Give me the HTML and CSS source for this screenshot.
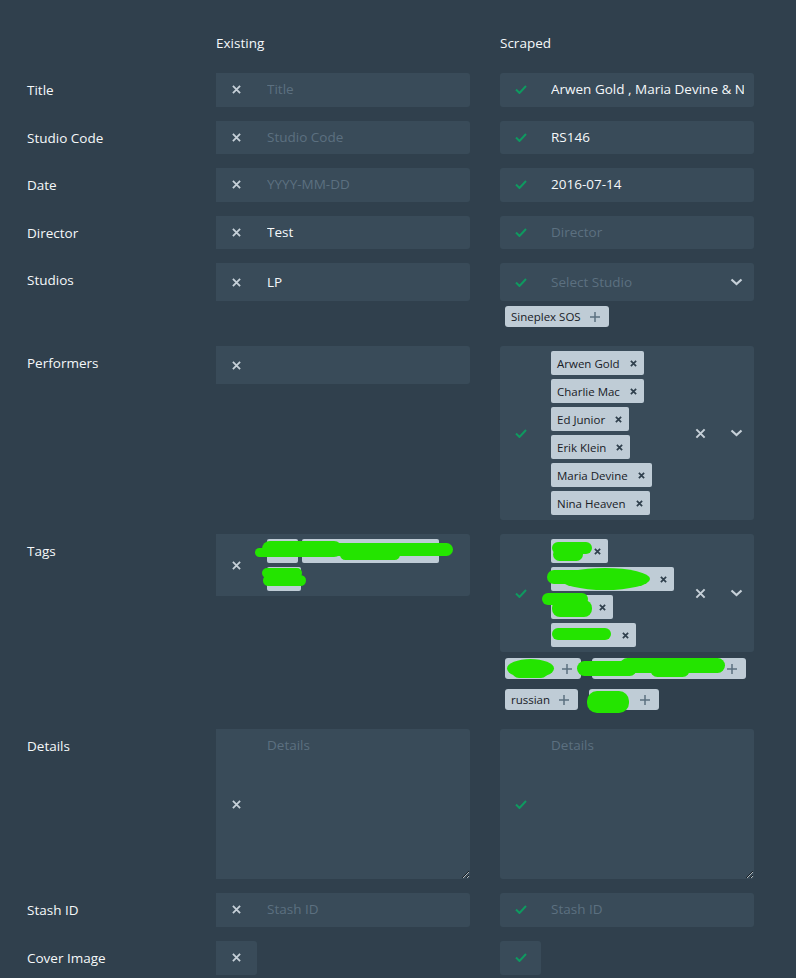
FILE: index.html
```html
<!DOCTYPE html>
<html lang="en">
<head>
    <meta charset="UTF-8">
    <title>Scene Scrape Results</title>
    <link rel="stylesheet" href="styles.css">
</head>
<body>
    <div class="scrape-dialog">
        <div class="scrape-row header-row">
            <div></div>
            <div class="col-head">Existing</div>
            <div class="col-head">Scraped</div>
        </div>

        <div class="scrape-row">
            <label class="row-label">Title</label>
            <div class="field existing">
                <button class="toggle"><svg class="icon-x" viewBox="0 0 10 10"><path d="M1 1L9 9M9 1L1 9"/></svg></button>
                <input class="value" placeholder="Title" readonly>
            </div>
            <div class="field scraped">
                <button class="toggle"><svg class="icon-check" viewBox="0 0 12 9"><path d="M1 4.5L4.5 8L11 1"/></svg></button>
                <input class="value" value="Arwen Gold , Maria Devine &amp; Nina Heaven" readonly>
            </div>
        </div>

        <div class="scrape-row">
            <label class="row-label">Studio Code</label>
            <div class="field existing">
                <button class="toggle"><svg class="icon-x" viewBox="0 0 10 10"><path d="M1 1L9 9M9 1L1 9"/></svg></button>
                <input class="value" placeholder="Studio Code" readonly>
            </div>
            <div class="field scraped">
                <button class="toggle"><svg class="icon-check" viewBox="0 0 12 9"><path d="M1 4.5L4.5 8L11 1"/></svg></button>
                <input class="value" value="RS146" readonly>
            </div>
        </div>

        <div class="scrape-row">
            <label class="row-label">Date</label>
            <div class="field existing">
                <button class="toggle"><svg class="icon-x" viewBox="0 0 10 10"><path d="M1 1L9 9M9 1L1 9"/></svg></button>
                <input class="value" placeholder="YYYY-MM-DD" readonly>
            </div>
            <div class="field scraped">
                <button class="toggle"><svg class="icon-check" viewBox="0 0 12 9"><path d="M1 4.5L4.5 8L11 1"/></svg></button>
                <input class="value" value="2016-07-14" readonly>
            </div>
        </div>

        <div class="scrape-row">
            <label class="row-label">Director</label>
            <div class="field existing">
                <button class="toggle"><svg class="icon-x" viewBox="0 0 10 10"><path d="M1 1L9 9M9 1L1 9"/></svg></button>
                <input class="value" value="Test" readonly>
            </div>
            <div class="field scraped">
                <button class="toggle"><svg class="icon-check" viewBox="0 0 12 9"><path d="M1 4.5L4.5 8L11 1"/></svg></button>
                <input class="value" placeholder="Director" readonly>
            </div>
        </div>

        <div class="scrape-row">
            <label class="row-label">Studios</label>
            <div class="field existing select">
                <button class="toggle"><svg class="icon-x" viewBox="0 0 10 10"><path d="M1 1L9 9M9 1L1 9"/></svg></button>
                <div class="select-values"><span class="single-value">LP</span></div>
            </div>
            <div>
                <div class="field scraped select">
                    <button class="toggle"><svg class="icon-check" viewBox="0 0 12 9"><path d="M1 4.5L4.5 8L11 1"/></svg></button>
                    <div class="select-values"><span class="placeholder">Select Studio</span></div>
                    <div class="indicator"><svg class="icon-chevron" viewBox="0 0 13 8"><path d="M1.5 1.5L6.5 6L11.5 1.5"/></svg></div>
                </div>
                <div class="new-items">
                    <span class="chip">Sineplex SOS<svg class="icon-plus" viewBox="0 0 10 10"><path d="M5 0V10M0 5H10"/></svg></span>
                </div>
            </div>
        </div>

        <div class="scrape-row">
            <label class="row-label">Performers</label>
            <div class="field existing select">
                <button class="toggle"><svg class="icon-x" viewBox="0 0 10 10"><path d="M1 1L9 9M9 1L1 9"/></svg></button>
                <div class="select-values"></div>
            </div>
            <div class="field scraped select multi">
                <button class="toggle"><svg class="icon-check" viewBox="0 0 12 9"><path d="M1 4.5L4.5 8L11 1"/></svg></button>
                <div class="select-values">
                    <span class="multi-value"><span class="mv-label">Arwen Gold</span><span class="mv-remove"><svg viewBox="0 0 8 8"><path d="M1 1L7 7M7 1L1 7"/></svg></span></span>
                    <span class="multi-value"><span class="mv-label">Charlie Mac</span><span class="mv-remove"><svg viewBox="0 0 8 8"><path d="M1 1L7 7M7 1L1 7"/></svg></span></span>
                    <span class="multi-value"><span class="mv-label">Ed Junior</span><span class="mv-remove"><svg viewBox="0 0 8 8"><path d="M1 1L7 7M7 1L1 7"/></svg></span></span>
                    <span class="multi-value"><span class="mv-label">Erik Klein</span><span class="mv-remove"><svg viewBox="0 0 8 8"><path d="M1 1L7 7M7 1L1 7"/></svg></span></span>
                    <span class="multi-value"><span class="mv-label">Maria Devine</span><span class="mv-remove"><svg viewBox="0 0 8 8"><path d="M1 1L7 7M7 1L1 7"/></svg></span></span>
                    <span class="multi-value"><span class="mv-label">Nina Heaven</span><span class="mv-remove"><svg viewBox="0 0 8 8"><path d="M1 1L7 7M7 1L1 7"/></svg></span></span>
                </div>
                <div class="indicator"><svg class="icon-clear" viewBox="0 0 12 12"><path d="M1.5 1.5L10.5 10.5M10.5 1.5L1.5 10.5"/></svg></div>
                <div class="indicator"><svg class="icon-chevron" viewBox="0 0 13 8"><path d="M1.5 1.5L6.5 6L11.5 1.5"/></svg></div>
            </div>
        </div>

        <div class="scrape-row">
            <label class="row-label">Tags</label>
            <div class="field existing select multi">
                <button class="toggle"><svg class="icon-x" viewBox="0 0 10 10"><path d="M1 1L9 9M9 1L1 9"/></svg></button>
                <div class="select-values">
                    <span class="multi-value hidden-tag w-31"></span>
                    <span class="multi-value hidden-tag w-137"></span>
                    <span class="multi-value hidden-tag w-34"></span>
                </div>
            </div>
            <div>
                <div class="field scraped select multi">
                    <button class="toggle"><svg class="icon-check" viewBox="0 0 12 9"><path d="M1 4.5L4.5 8L11 1"/></svg></button>
                    <div class="select-values">
                        <span class="multi-value"><span class="mv-label hidden-label w-27"></span><span class="mv-remove"><svg viewBox="0 0 8 8"><path d="M1 1L7 7M7 1L1 7"/></svg></span></span>
                        <span class="multi-value"><span class="mv-label hidden-label w-93"></span><span class="mv-remove"><svg viewBox="0 0 8 8"><path d="M1 1L7 7M7 1L1 7"/></svg></span></span>
                        <span class="multi-value"><span class="mv-label hidden-label w-32"></span><span class="mv-remove"><svg viewBox="0 0 8 8"><path d="M1 1L7 7M7 1L1 7"/></svg></span></span>
                        <span class="multi-value"><span class="mv-label hidden-label w-55"></span><span class="mv-remove"><svg viewBox="0 0 8 8"><path d="M1 1L7 7M7 1L1 7"/></svg></span></span>
                    </div>
                    <div class="indicator"><svg class="icon-clear" viewBox="0 0 12 12"><path d="M1.5 1.5L10.5 10.5M10.5 1.5L1.5 10.5"/></svg></div>
                    <div class="indicator"><svg class="icon-chevron" viewBox="0 0 13 8"><path d="M1.5 1.5L6.5 6L11.5 1.5"/></svg></div>
                </div>
                <div class="new-items tag-items">
                    <span class="chip"><span class="hidden-label w-42"></span><svg class="icon-plus" viewBox="0 0 10 10"><path d="M5 0V10M0 5H10"/></svg></span>
                    <span class="chip"><span class="hidden-label w-120"></span><svg class="icon-plus" viewBox="0 0 10 10"><path d="M5 0V10M0 5H10"/></svg></span>
                    <span class="chip">russian<svg class="icon-plus" viewBox="0 0 10 10"><path d="M5 0V10M0 5H10"/></svg></span>
                    <span class="chip"><span class="hidden-label w-36"></span><svg class="icon-plus" viewBox="0 0 10 10"><path d="M5 0V10M0 5H10"/></svg></span>
                </div>
            </div>
        </div>

        <div class="scrape-row">
            <label class="row-label">Details</label>
            <div class="field existing area">
                <button class="toggle"><svg class="icon-x" viewBox="0 0 10 10"><path d="M1 1L9 9M9 1L1 9"/></svg></button>
                <textarea class="value" placeholder="Details" readonly></textarea>
            </div>
            <div class="field scraped area">
                <button class="toggle"><svg class="icon-check" viewBox="0 0 12 9"><path d="M1 4.5L4.5 8L11 1"/></svg></button>
                <textarea class="value" placeholder="Details" readonly></textarea>
            </div>
        </div>

        <div class="scrape-row">
            <label class="row-label">Stash ID</label>
            <div class="field existing">
                <button class="toggle"><svg class="icon-x" viewBox="0 0 10 10"><path d="M1 1L9 9M9 1L1 9"/></svg></button>
                <input class="value" placeholder="Stash ID" readonly>
            </div>
            <div class="field scraped">
                <button class="toggle"><svg class="icon-check" viewBox="0 0 12 9"><path d="M1 4.5L4.5 8L11 1"/></svg></button>
                <input class="value" placeholder="Stash ID" readonly>
            </div>
        </div>

        <div class="scrape-row">
            <label class="row-label">Cover Image</label>
            <div class="field existing image">
                <button class="toggle"><svg class="icon-x" viewBox="0 0 10 10"><path d="M1 1L9 9M9 1L1 9"/></svg></button>
            </div>
            <div class="field scraped image">
                <button class="toggle"><svg class="icon-check" viewBox="0 0 12 9"><path d="M1 4.5L4.5 8L11 1"/></svg></button>
            </div>
        </div>

        <!-- redaction marks painted over the tag names -->
        <div class="redactions">
            <span class="mark m1"></span>
            <span class="mark m2"></span>
            <span class="mark m3"></span>
            <span class="mark m4"></span>
            <span class="mark m5"></span>
            <span class="mark m6"></span>
            <span class="mark m7"></span>
            <span class="mark m8"></span>
            <span class="mark m9"></span>
            <span class="mark m10"></span>
            <span class="mark m11"></span>
            <span class="mark m12"></span>
            <span class="mark m13"></span>
            <span class="mark m14"></span>
            <span class="mark m15"></span>
            <span class="mark m16"></span>
            <span class="mark m17"></span>
            <span class="mark m18"></span>
            <span class="mark m19"></span>
        </div>
    </div>
</body>
</html>
```

FILE: styles.css
```css
:root {
    --bg: #30404d;
    --field-bg: #394b59;
    --text: #f5f8fa;
    --muted: #5c7080;
    --tag-bg: #bfccd6;
    --tag-text: #182026;
    --ok: #0f9960;
    --redact: #24e400;
}

html {
    font-size: 14px;
}

body {
    margin: 0;
    min-height: 100vh;
    background: var(--bg);
    color: var(--text);
    font-family: "Open Sans", "Noto Sans", sans-serif;
    font-size: 13.5px;
    line-height: 21px;
}

.scrape-dialog {
    position: relative;
    padding: 33px 0 0 27px;
}

.scrape-row {
    display: grid;
    grid-template-columns: 159px 254px 254px;
    column-gap: 30px;
    align-items: start;
    margin-bottom: 14px;
}

.header-row {
    margin-bottom: 19px;
}

.row-label {
    padding-top: 7px;
}

.field {
    display: flex;
    min-height: 33.5px;
    background: var(--field-bg);
    border-radius: 0 3px 3px 0;
}

.field.scraped {
    border-radius: 3px;
}

.toggle {
    flex: 0 0 41px;
    display: flex;
    align-items: center;
    justify-content: center;
    padding: 0;
    border: 0;
    background: transparent;
    color: #c6d0d8;
}

.icon-x {
    width: 9px;
    height: 9px;
    fill: none;
    stroke: currentColor;
    stroke-width: 2;
}

.icon-check {
    width: 12px;
    height: 9px;
    fill: none;
    stroke: var(--ok);
    stroke-width: 2;
}

.value {
    flex: 1;
    min-width: 0;
    margin: 0;
    padding: 0 10.5px 0 10px;
    border: 0;
    background: transparent;
    color: var(--text);
    font: inherit;
    outline: none;
}

.value::placeholder {
    color: var(--muted);
}

.field.image {
    width: 41px;
    height: 34px;
}

.field.area {
    height: 150px;
}

textarea.value {
    padding-top: 6px;
    resize: vertical;
}

/* select-like fields */
.field.select {
    min-height: 38px;
}

.select-values {
    flex: 1;
    display: flex;
    flex-wrap: wrap;
    align-items: center;
    align-content: center;
    min-width: 0;
    padding: 3px 8px;
}

.single-value,
.placeholder {
    margin-left: 2px;
}

.placeholder {
    color: var(--muted);
}

.indicator {
    flex: 0 0 36px;
    display: flex;
    align-items: center;
    justify-content: center;
    color: #c6d0d8;
}

.icon-chevron {
    width: 13px;
    height: 8px;
    fill: none;
    stroke: currentColor;
    stroke-width: 2.2;
}

.icon-clear {
    width: 11px;
    height: 11px;
    fill: none;
    stroke: currentColor;
    stroke-width: 2.2;
}

.multi-value {
    display: flex;
    align-items: center;
    height: 24px;
    margin: 2px;
    background: var(--tag-bg);
    color: var(--tag-text);
    border-radius: 2px;
    font-size: 11.5px;
}

.mv-label {
    padding-left: 6px;
}

.mv-remove {
    display: flex;
    padding: 0 7px 0 10px;
}

.mv-remove svg {
    width: 7px;
    height: 7px;
    fill: none;
    stroke: #30404d;
    stroke-width: 2;
}

.hidden-label {
    display: inline-block;
    height: 10px;
}

.hidden-tag.w-31 { width: 31px; }
.hidden-tag.w-137 { width: 137px; }
.hidden-tag.w-34 { width: 34px; }
.w-27 { width: 27px; }
.w-93 { width: 93px; }
.w-32 { width: 32px; }
.w-55 { width: 55px; }
.w-42 { width: 42px; }
.w-120 { width: 120px; }
.w-36 { width: 36px; }

/* new items offered by the scraper */
.new-items {
    display: flex;
    flex-wrap: wrap;
    gap: 10px 11px;
    padding: 5px 0 5px 5px;
}

.tag-items {
    padding-top: 6px;
}

.chip {
    display: flex;
    align-items: center;
    height: 21px;
    padding: 0 9px 0 6px;
    background: var(--tag-bg);
    color: var(--tag-text);
    border-radius: 3px;
    font-size: 11.5px;
}

.icon-plus {
    width: 10px;
    height: 10px;
    margin-left: 9px;
    fill: none;
    stroke: var(--muted);
    stroke-width: 1.5;
}

/* green scribbles over redacted names */
.redactions {
    position: absolute;
    top: 0;
    left: 0;
}

.mark {
    position: absolute;
    background: var(--redact);
    border-radius: 8px;
}

.m1 { left: 255px; top: 548px; width: 50px; height: 9px; }
.m2 { left: 262px; top: 541px; width: 80px; height: 16px; }
.m3 { left: 330px; top: 543px; width: 123px; height: 13px; }
.m4 { left: 340px; top: 549px; width: 60px; height: 11px; }
.m5 { left: 262px; top: 568px; width: 40px; height: 10px; }
.m6 { left: 263px; top: 575px; width: 43px; height: 11px; }
.m7 { left: 552px; top: 542px; width: 40px; height: 12px; }
.m8 { left: 553px; top: 548px; width: 30px; height: 13px; }
.m9 { left: 547px; top: 570px; width: 55px; height: 14px; }
.m10 { left: 560px; top: 568px; width: 90px; height: 22px; border-radius: 50%; }
.m11 { left: 542px; top: 593px; width: 46px; height: 12px; }
.m12 { left: 552px; top: 600px; width: 40px; height: 17px; }
.m13 { left: 552px; top: 628px; width: 59px; height: 12px; }
.m14 { left: 507px; top: 659px; width: 47px; height: 19px; border-radius: 50%; }
.m15 { left: 577px; top: 661px; width: 60px; height: 15px; }
.m16 { left: 620px; top: 658px; width: 105px; height: 15px; }
.m17 { left: 650px; top: 662px; width: 40px; height: 15px; }
.m18 { left: 587px; top: 691px; width: 42px; height: 22px; border-radius: 10px; }
.m19 { left: 512px; top: 664px; width: 36px; height: 14px; }
```
